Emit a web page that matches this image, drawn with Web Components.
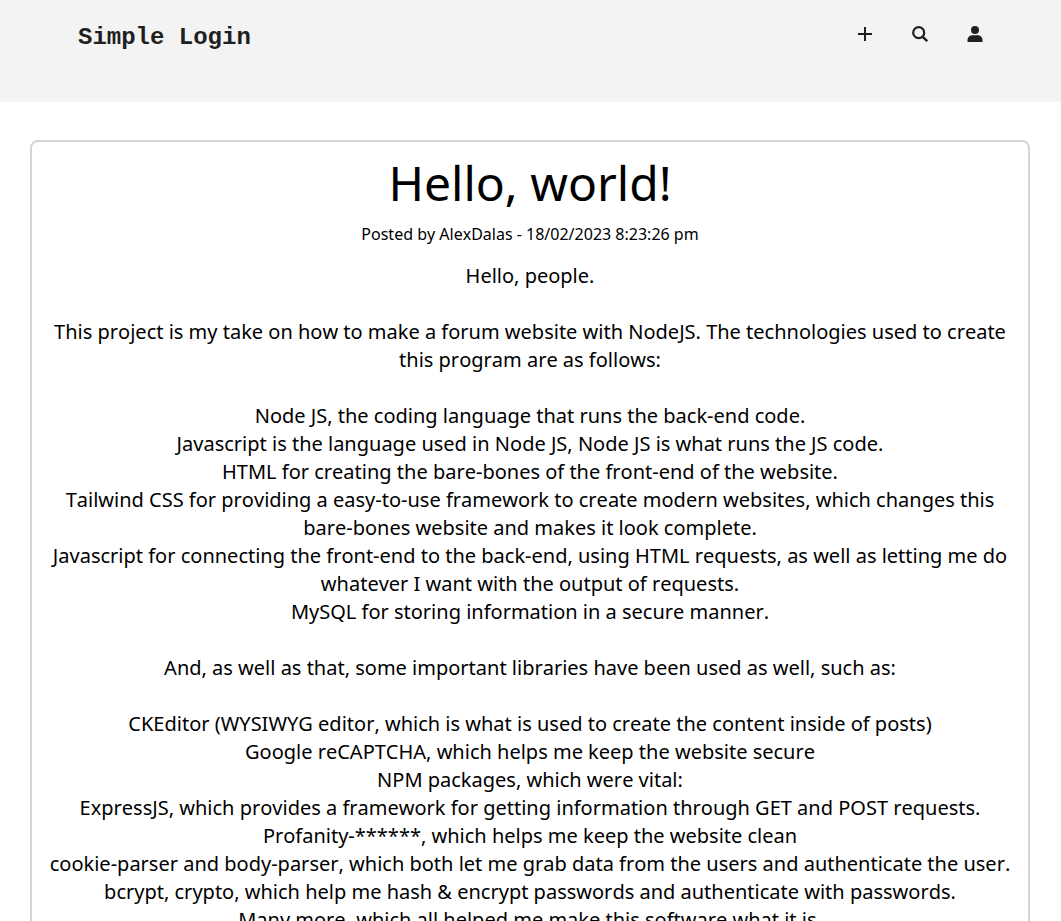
<!DOCTYPE html>
<html lang="en"><head><meta charset="utf-8"><title>Simple Login</title>
<style>
html,body{margin:0;padding:0;background:#fff;height:921px;overflow:hidden}
body{font-family:"Noto Sans",sans-serif;color:#000}
</style></head><body>
<site-nav>
<nav-icon slot="icons" kind="plus"></nav-icon>
<nav-icon slot="icons" kind="search"></nav-icon>
<nav-icon slot="icons" kind="user"></nav-icon>
</site-nav>
<post-card heading="Hello, world!" byline="Posted by AlexDalas - 18/02/2023 8:23:26 pm">Hello, people.<br><br>This project is my take on how to make a forum website with NodeJS. The technologies used to create this program are as follows:<br><br>Node JS, the coding language that runs the back-end code.<br>Javascript is the language used in Node JS, Node JS is what runs the JS code.<br>HTML for creating the bare-bones of the front-end of the website.<br>Tailwind CSS for providing a easy-to-use framework to create modern websites, which changes this bare-bones website and makes it look complete.<br>Javascript for connecting the front-end to the back-end, using HTML requests, as well as letting me do whatever I want with the output of requests.<br>MySQL for storing information in a secure manner.<br><br>And, as well as that, some important libraries have been used as well, such as:<br><br>CKEditor (WYSIWYG editor, which is what is used to create the content inside of posts)<br>Google reCAPTCHA, which helps me keep the website secure<br>NPM packages, which were vital:<br>ExpressJS, which provides a framework for getting information through GET and POST requests.<br>Profanity-******, which helps me keep the website clean<br>cookie-parser and body-parser, which both let me grab data from the users and authenticate the user.<br>bcrypt, crypto, which help me hash &amp; encrypt passwords and authenticate with passwords.<br>Many more, which all helped me make this software what it is.</post-card>
<script>
class SiteNav extends HTMLElement{constructor(){super();this.attachShadow({mode:"open"}).innerHTML=`<style>
:host{display:flex;box-sizing:border-box;height:102px;background:#f3f3f3;padding:0 59px 0 78px;justify-content:space-between;align-items:flex-start}
.t{font:bold 24px/32px "Liberation Mono",monospace;color:#1f1f1f;margin-top:22px}
.i{display:flex;margin-top:12px}
</style><div class="t">Simple Login</div><div class="i"><slot name="icons"></slot></div>`}}
customElements.define("site-nav",SiteNav);
const P={
plus:'<path d="M8 1v14M1 8h14" fill="none" stroke="currentColor" stroke-width="2"/>',
search:'<circle cx="6.700" cy="6.700" r="5.500" fill="none" stroke="currentColor" stroke-width="2.200"/><path d="M10.800 10.800l4.400 4.400" fill="none" stroke="currentColor" stroke-width="2.400"/>',
user:'<circle cx="8" cy="4" r="4" fill="currentColor"/><path d="M0.500 16v-2c0-3 2.500-4.800 5-4.800h5c2.500 0 5 1.800 5 4.800v2z" fill="currentColor"/>'};
class NavIcon extends HTMLElement{constructor(){super();this.attachShadow({mode:"open"})}
connectedCallback(){this.shadowRoot.innerHTML=`<style>:host{display:flex;width:55px;height:44px;align-items:center;justify-content:center;color:#1f1f1f}svg{width:16px;height:16px}</style><svg viewBox="0 0 16 16">${P[this.getAttribute("kind")]}</svg>`}}
customElements.define("nav-icon",NavIcon);
class PostCard extends HTMLElement{constructor(){super();this.attachShadow({mode:"open"})}
connectedCallback(){this.shadowRoot.innerHTML=`<style>
:host{display:block;box-sizing:border-box;width:1000px;margin:38px 0 0 30px;border:2px solid #d1d5db;border-radius:8px;text-align:center;padding:1px 16px 0;background:#fff;font-kerning:none}
h1{margin:0;font:400 48px/80px "Noto Sans",sans-serif}
.b{font-size:16px;line-height:24px;margin-top:-1px}
.c{font-size:20px;line-height:28px;margin-top:16px}
</style><h1>${this.getAttribute("heading")}</h1><div class="b">${this.getAttribute("byline")}</div><div class="c"><slot></slot></div>`}}
customElements.define("post-card",PostCard);
</script></body></html>
